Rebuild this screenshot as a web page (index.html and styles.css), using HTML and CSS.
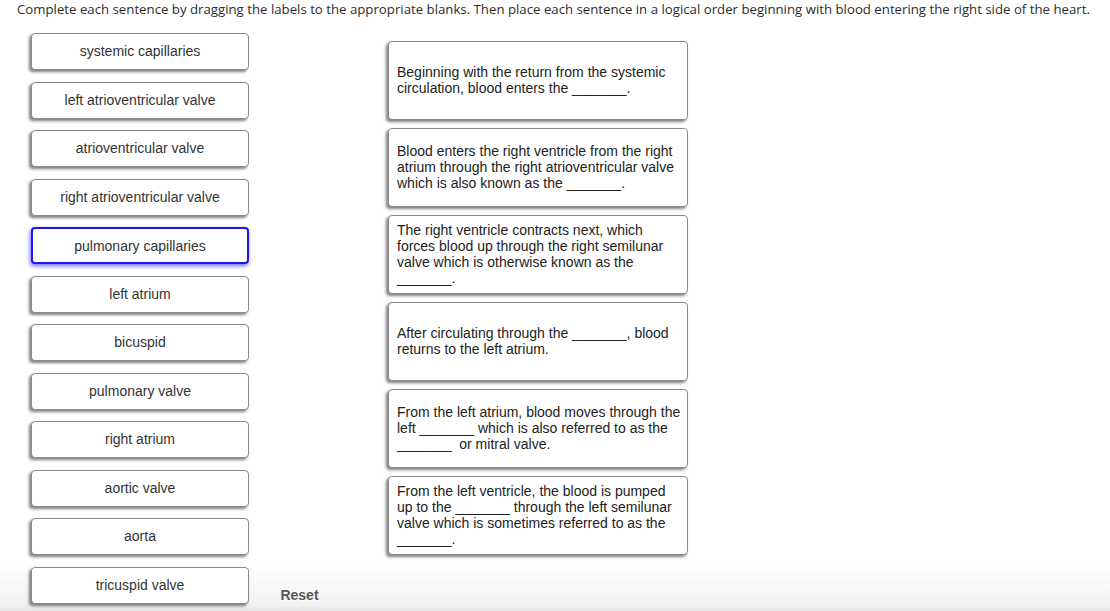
FILE: index.html
```html
<!DOCTYPE html>
<html>
<head>
<meta charset="utf-8">
<link rel="stylesheet" href="styles.css">
</head>
<body>
<p class="instructions">Complete each sentence by dragging the labels to the appropriate blanks. Then place each sentence in a logical order beginning with blood entering the right side of the heart.</p>
<div class="workspace">
  <div class="labels">
    <div class="label">systemic capillaries</div>
    <div class="label">left atrioventricular valve</div>
    <div class="label">atrioventricular valve</div>
    <div class="label">right atrioventricular valve</div>
    <div class="label label-focus">pulmonary capillaries</div>
    <div class="label">left atrium</div>
    <div class="label">bicuspid</div>
    <div class="label">pulmonary valve</div>
    <div class="label">right atrium</div>
    <div class="label">aortic valve</div>
    <div class="label">aorta</div>
    <div class="label">tricuspid valve</div>
  </div>
  <div class="middle">
    <button class="reset">Reset</button>
  </div>
  <div class="sentences">
    <div class="sentence"><p>Beginning with the return from the systemic circulation, blood enters the _______.</p></div>
    <div class="sentence"><p>Blood enters the right ventricle from the right atrium through the right atrioventricular valve which is also known as the _______.</p></div>
    <div class="sentence"><p>The right ventricle contracts next, which forces blood up through the right semilunar valve which is otherwise known as the<br>_______.</p></div>
    <div class="sentence"><p>After circulating through the _______, blood returns to the left atrium.</p></div>
    <div class="sentence"><p class="nowrap">From the left atrium, blood moves through the<br>left _______ which is also referred to as the<br>_______ &nbsp;or mitral valve.</p></div>
    <div class="sentence"><p>From the left ventricle, the blood is pumped up to the _______ through the left semilunar valve which is sometimes referred to as the<br>_______.</p></div>
  </div>
</div>
</body>
</html>
```
FILE: styles.css
```css
html, body {
  margin: 0;
  padding: 0;
}
body {
  width: 1110px;
  height: 611px;
  overflow: hidden;
  background: linear-gradient(to bottom, #ffffff 0, #ffffff 565px, #f1f1f1 606px, #e4e4e4 611px);
  font-family: "Liberation Sans", Arial, sans-serif;
  color: #333;
}
.instructions {
  margin: 0;
  padding: 1px 0 0 17px;
  font-family: "Open Sans", "Liberation Sans", sans-serif;
  font-size: 13.22px;
  line-height: 17px;
  color: #2d2d2d;
  white-space: nowrap;
}
.workspace {
  display: flex;
  padding: 15px 0 0 31px;
  height: 560px;
}
.labels {
  width: 218px;
  display: flex;
  flex-direction: column;
  gap: 11.5px;
}
.label {
  box-sizing: border-box;
  height: 37px;
  border: 1.5px solid #8a8a8a;
  border-radius: 4px;
  background: #fff;
  box-shadow: -2px 2px 3px rgba(0, 0, 0, 0.5);
  font-size: 14px;
  color: #333;
  text-align: center;
  line-height: 34px;
  padding-bottom: 3px;
}
.label-focus {
  border: 2px solid #1a1aee;
  box-shadow: -1px 2px 4px rgba(30, 30, 255, 0.65);
}
.middle {
  width: 139px;
  display: flex;
  align-items: flex-end;
  justify-content: center;
}
.reset {
  border: none;
  background: none;
  font-family: "Liberation Sans", Arial, sans-serif;
  font-weight: bold;
  font-size: 14px;
  color: #555;
  text-shadow: 0 1px 0 #fff;
  padding: 0;
  margin: 0 0 -10px -38px;
}
.sentences {
  width: 300px;
  display: flex;
  flex-direction: column;
  gap: 8.5px;
  padding-top: 8px;
}
.sentence {
  box-sizing: border-box;
  height: 78.5px;
  border: 1.5px solid #8a8a8a;
  border-radius: 4px;
  background: #fff;
  box-shadow: -2px 2px 3px rgba(0, 0, 0, 0.5);
  display: flex;
  align-items: center;
  padding: 0 8px;
}
.sentence p {
  margin: 0;
  font-size: 14px;
  line-height: 16px;
  color: #222;
}
.sentence p.nowrap {
  white-space: nowrap;
}
```
